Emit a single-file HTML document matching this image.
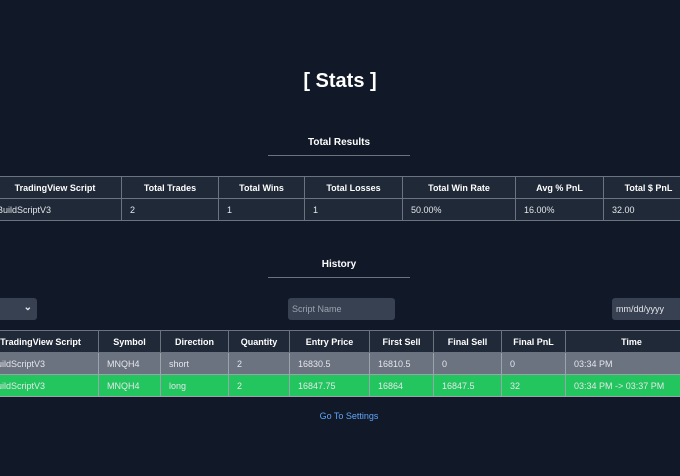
<!DOCTYPE html>
<html><head><style>
html,body{margin:0;padding:0;width:680px;height:476px;overflow:hidden;background:#111827;font-family:"Liberation Sans",sans-serif;color:#e5e7eb}
.abs{position:absolute}
h1{position:absolute;top:68px;left:0;width:680px;text-align:center;margin:0;font-size:20px;font-weight:bold;color:#fff;line-height:26px}
.h2{position:absolute;left:268px;width:142px;text-align:center;font-size:10px;font-weight:bold;color:#fff;border-bottom:1px solid #6b7280;padding-bottom:7px}
table{position:absolute;border-collapse:collapse;table-layout:fixed;font-size:9px}
td,th{border:1px solid #6b7280;height:22px;padding:0 0 0 8px;white-space:nowrap;overflow:hidden;box-sizing:border-box}
th{background:#1f2937;color:#fff;text-align:center;padding:0;font-size:9px}
td{background:#1f2937}
tr.g td{background:#6b7280;border-color:#9ca3af}
tr.gr td{background:#22c55e;border-color:#9ca3af}
.in{position:absolute;background:#374151;border-radius:3px;font-size:9px;color:#9ca3af;box-sizing:border-box;padding-left:4px}
</style></head><body>
<h1>[ Stats ]</h1>
<div class="h2" style="top:137px">Total Results</div>
<table style="left:-12px;top:176px;width:705px">
<colgroup><col style="width:133px"><col style="width:97px"><col style="width:86px"><col style="width:98px"><col style="width:113px"><col style="width:88px"><col style="width:90px"></colgroup>
<tr><th>TradingView Script</th><th>Total Trades</th><th>Total Wins</th><th>Total Losses</th><th>Total Win Rate</th><th>Avg % PnL</th><th>Total $ PnL</th></tr>
<tr><td>BuildScriptV3</td><td>2</td><td>1</td><td>1</td><td>50.00%</td><td>16.00%</td><td>32.00</td></tr>
</table>
<div class="h2" style="top:259px">History</div>
<div class="in" style="left:-10px;top:298px;width:47px;height:22px"><span style="position:absolute;right:5px;top:4px;color:#e5e7eb;font-size:10px;font-weight:bold">&#8964;</span></div>
<div class="in" style="left:288px;top:298px;width:107px;height:22px;line-height:22px">Script Name</div>
<div class="in" style="left:612px;top:298px;width:80px;height:22px;line-height:22px;color:#e5e7eb">mm/dd/yyyy</div>
<table style="left:-18px;top:330px;width:715px">
<colgroup><col style="width:116px"><col style="width:62px"><col style="width:68px"><col style="width:61px"><col style="width:80px"><col style="width:64px"><col style="width:68px"><col style="width:64px"><col style="width:132px"></colgroup>
<tr><th>TradingView Script</th><th>Symbol</th><th>Direction</th><th>Quantity</th><th>Entry Price</th><th>First Sell</th><th>Final Sell</th><th>Final PnL</th><th>Time</th></tr>
<tr class="g"><td>BuildScriptV3</td><td>MNQH4</td><td>short</td><td>2</td><td>16830.5</td><td>16810.5</td><td>0</td><td>0</td><td>03:34 PM</td></tr>
<tr class="gr"><td>BuildScriptV3</td><td>MNQH4</td><td>long</td><td>2</td><td>16847.75</td><td>16864</td><td>16847.5</td><td>32</td><td>03:34 PM -&gt; 03:37 PM</td></tr>
</table>
<div class="abs" style="left:0;width:698px;top:411px;text-align:center;font-size:9px;color:#60a5fa">Go To Settings</div>
</body></html>
